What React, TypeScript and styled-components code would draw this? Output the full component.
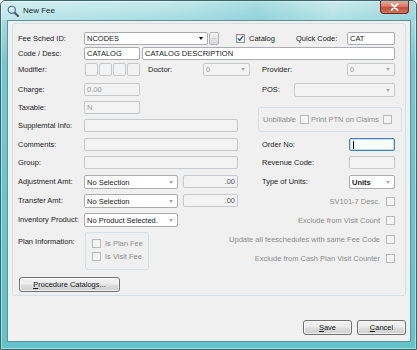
import React from 'react'
import styled, {createGlobalStyle} from 'styled-components'

const GlobalStyle = createGlobalStyle`
  html, body {
    margin: 0;
    padding: 0;
    background: #ffffff;
  }

  body {
    width: 417px;
    height: 350px;
    overflow: hidden;
    font-family: "Liberation Sans", Arial, sans-serif;
  }
`

const Window = styled.div`
  box-sizing: border-box;
  width: 417px;
  height: 350px;
  display: flex;
  flex-direction: column;
  border: 1px solid #3a666c;
  border-radius: 5px 5px 0 0;
  background: linear-gradient(180deg, #c6eaed 0px, #a6dde2 19px, #72c9cf 60px, #62c3c9 100%);
  box-shadow: inset 0 0 0 1px rgba(255, 255, 255, 0.45);
`

const TitleBar = styled.div`
  flex: none;
  height: 19px;
  display: flex;
  align-items: center;
  padding-left: 6px;
  background: linear-gradient(90deg, rgba(255, 255, 255, 0.25) 0%, rgba(255, 255, 255, 0) 40%, rgba(80, 175, 185, 0.22) 62%, rgba(255, 255, 255, 0.1) 80%, rgba(80, 175, 185, 0.2) 100%);
`

const TitleText = styled.span`
  margin-left: 4px;
  font-size: 8px;
  color: #17282a;
`

const CloseButton = styled.div`
  margin-left: auto;
  margin-right: 7px;
  align-self: flex-start;
  box-sizing: border-box;
  width: 29px;
  height: 13px;
  border: 1px solid #6e2a26;
  border-top: none;
  border-radius: 0 0 4px 4px;
  background: linear-gradient(180deg, #eaa898 0%, #dc7a66 45%, #c74b35 55%, #d57659 100%);
  display: flex;
  align-items: center;
  justify-content: center;
`

const Client = styled.div`
  flex: 1;
  margin: 0 5px 7px 6px;
  border: 1px solid #5f9097;
  background: #f0f0f0;
  display: flex;
  flex-direction: column;
  padding: 2px 4px 0 4px;
`

const Panel = styled.div`
  box-sizing: border-box;
  height: 273px;
  border: 1px solid #d5dfe5;
  border-radius: 3px;
  padding: 8px 10px 0 5px;
  display: flex;
  flex-direction: column;
`

const TopRow = styled.div<{ $gap: number }>`
  display: flex;
  align-items: center;
  height: 13px;
  margin-bottom: ${p => p.$gap}px;
`

const Label = styled.span<{ $w?: number; $ml?: number; $gray?: boolean; $pt?: number }>`
  flex: none;
  width: ${p => (p.$w ? `${p.$w}px` : 'auto')};
  margin-left: ${p => p.$ml ?? 0}px;
  padding-top: ${p => p.$pt ?? 0}px;
  font-size: 7.5px;
  line-height: 13px;
  white-space: nowrap;
  color: ${p => (p.$gray ? '#8c8c8c' : '#1c1c1c')};
`

const TextBox = styled.div<{ $w?: number; $ml?: number; $disabled?: boolean; $focused?: boolean; $right?: boolean }>`
  box-sizing: border-box;
  flex: ${p => (p.$w ? 'none' : '1')};
  width: ${p => (p.$w ? `${p.$w}px` : 'auto')};
  height: 13px;
  margin-left: ${p => p.$ml ?? 0}px;
  display: flex;
  align-items: center;
  justify-content: ${p => (p.$right ? 'flex-end' : 'flex-start')};
  padding: 0 2px;
  border: 1px solid ${p => (p.$focused ? '#3f83bd' : p.$disabled ? '#c6c9cc' : '#abadb3')};
  border-radius: 2px;
  background: ${p => (p.$disabled ? '#f3f3f3' : '#ffffff')};
  box-shadow: ${p => (p.$focused ? 'inset 0 0 0 1px #c5dcef' : 'none')};
  font-size: 7.5px;
  white-space: nowrap;
  overflow: hidden;
  color: ${p => (p.$disabled ? '#9a9a9a' : '#1a1a1a')};
`

const Caret = styled.span`
  width: 1px;
  height: 8px;
  margin-left: 1px;
  background: #000000;
`

const Combo = styled.div<{ $w?: number; $ml?: number; $disabled?: boolean; $h?: number }>`
  box-sizing: border-box;
  flex: ${p => (p.$w ? 'none' : '1')};
  width: ${p => (p.$w ? `${p.$w}px` : 'auto')};
  height: ${p => p.$h ?? 14}px;
  margin-left: ${p => p.$ml ?? 0}px;
  display: flex;
  align-items: center;
  padding-left: 2px;
  border: 1px solid ${p => (p.$disabled ? '#c6c9cc' : '#acacac')};
  border-radius: 2px;
  background: ${p => (p.$disabled ? '#f3f3f3' : '#ffffff')};
  font-size: 7.5px;
  color: ${p => (p.$disabled ? '#9a9a9a' : '#1a1a1a')};
`

const ComboText = styled.span<{ $bold?: boolean }>`
  flex: 1;
  white-space: nowrap;
  overflow: hidden;
  font-weight: ${p => (p.$bold ? 'bold' : 'normal')};
`

const Arrow = styled.span<{ $dark?: boolean }>`
  flex: none;
  width: 0;
  height: 0;
  margin-right: 4px;
  border-left: 2.5px solid transparent;
  border-right: 2.5px solid transparent;
  border-top: 3px solid ${p => (p.$dark ? '#151515' : '#a8a8a8')};
`

const DotsButton = styled.div`
  box-sizing: border-box;
  flex: none;
  width: 10px;
  height: 13px;
  margin-left: 1px;
  border: 1px solid #b4b4b4;
  border-radius: 2px;
  background: linear-gradient(180deg, #f4f4f4 0%, #e4e4e4 50%, #d6d6d6 100%);
  font-size: 6px;
  line-height: 9px;
  text-align: center;
  color: #8a8a8a;
`

const ModBox = styled.div`
  box-sizing: border-box;
  flex: none;
  width: 13px;
  height: 13px;
  margin-right: 1px;
  border: 1px solid #c6c9cc;
  border-radius: 2px;
  background: #f3f3f3;
`

const Check = styled.span<{ $ml?: number; $mr?: number; $disabled?: boolean }>`
  box-sizing: border-box;
  flex: none;
  width: 9px;
  height: 9px;
  margin-left: ${p => p.$ml ?? 0}px;
  margin-right: ${p => p.$mr ?? 0}px;
  display: flex;
  align-items: center;
  justify-content: center;
  border: 1px solid ${p => (p.$disabled ? '#b9b9b9' : '#8e8f8f')};
  background: ${p => (p.$disabled ? '#f4f4f4' : 'linear-gradient(135deg, #e6e6e6 0%, #ffffff 100%)')};
`

const FormGrid = styled.div`
  display: grid;
  margin-top: 7px;
  grid-template-columns: 66px 154px 24px 87px 46px;
  grid-template-rows: 18px 18px 19px 18px 19px 19px 19px 19px 19px 19px;
`

const Cell = styled.div<{ $col: string; $row?: string; $end?: boolean; $pt?: number }>`
  grid-column: ${p => p.$col};
  grid-row: ${p => p.$row ?? 'auto'};
  display: flex;
  align-items: flex-start;
  justify-content: ${p => (p.$end ? 'flex-end' : 'flex-start')};
  padding-top: ${p => p.$pt ?? 0}px;
  min-width: 0;
`

const GroupBox = styled.div`
  box-sizing: border-box;
  border: 1px solid #d5dfe5;
  border-radius: 3px;
`

const UnbillBox = styled(GroupBox)`
  grid-column: 4 / 6;
  grid-row: 2 / span 2;
  align-self: center;
  height: 25px;
  margin: 0 -7px 0 -4px;
  display: flex;
  align-items: center;
  padding-left: 4px;
`

const PlanBox = styled(GroupBox)`
  grid-column: 2;
  grid-row: 9 / span 2;
  width: 64px;
  height: 38px;
  margin-left: 1px;
  display: flex;
  flex-direction: column;
  gap: 4px;
  padding: 6px 0 0 6px;
`

const CheckRow = styled.div`
  display: flex;
  align-items: center;
  height: 9px;
`

const PushButton = styled.div<{ $w: number; $ml?: number }>`
  box-sizing: border-box;
  width: ${p => p.$w}px;
  height: 15px;
  margin-left: ${p => p.$ml ?? 0}px;
  border: 1px solid #707070;
  border-radius: 3px;
  background: linear-gradient(180deg, #f2f2f2 0%, #ebebeb 48%, #dddddd 52%, #cfcfcf 100%);
  box-shadow: inset 0 0 0 1px rgba(255, 255, 255, 0.7);
  font-size: 7.5px;
  line-height: 13px;
  text-align: center;
  color: #141414;

  u {
    text-decoration: underline;
  }
`

const Footer = styled.div`
  display: flex;
  justify-content: flex-end;
  margin-top: 24px;
  gap: 5px;
`

const MagnifierIcon = () => (
    <svg width="12" height="12" viewBox="0 0 12 12">
        <line x1="7" y1="7" x2="11" y2="11" stroke="#5a5a5a" strokeWidth="2.2" strokeLinecap="round"/>
        <circle cx="4.8" cy="4.8" r="3.6" fill="#cfe8f8" stroke="#3d6f9f" strokeWidth="1.1"/>
        <circle cx="3.8" cy="3.8" r="1.3" fill="#ffffff" opacity="0.8"/>
    </svg>
)

const CloseX = () => (
    <svg width="9" height="8" viewBox="0 0 9 8">
        <path d="M1.5 1 L7.5 7 M7.5 1 L1.5 7" stroke="#ffffff" strokeWidth="1.8" strokeLinecap="round"/>
    </svg>
)

const Tick = () => (
    <svg width="7" height="7" viewBox="0 0 7 7">
        <path d="M1 3.5 L2.8 5.5 L6 1" stroke="#3a5a96" strokeWidth="1.3" fill="none"/>
    </svg>
)

const rightChecks = [
    {row: '7', text: 'SV101-7 Desc.'},
    {row: '8', text: 'Exclude from Visit Count'},
    {row: '9', text: 'Update all feeschedules with same Fee Code'},
    {row: '10', text: 'Exclude from Cash Plan Visit Counter'},
]

const App = () => {
    return (
        <>
            <GlobalStyle/>
            <Window>
                <TitleBar>
                    <MagnifierIcon/>
                    <TitleText>New Fee</TitleText>
                    <CloseButton><CloseX/></CloseButton>
                </TitleBar>

                <Client>
                    <Panel>
                        <TopRow $gap={2}>
                            <Label $w={66}>Fee Sched ID:</Label>
                            <Combo $w={124} $h={13}>
                                <ComboText>NCODES</ComboText>
                                <Arrow $dark/>
                            </Combo>
                            <DotsButton>...</DotsButton>
                            <Check $ml={17}><Tick/></Check>
                            <Label $ml={4}>Catalog</Label>
                            <Label $w={51} style={{marginLeft: 'auto'}}>Quick Code:</Label>
                            <TextBox $w={48}>CAT</TextBox>
                        </TopRow>

                        <TopRow $gap={3}>
                            <Label $w={66}>Code / Desc:</Label>
                            <TextBox $w={56}>CATALOG</TextBox>
                            <TextBox $ml={2}>CATALOG DESCRIPTION</TextBox>
                        </TopRow>

                        <TopRow $gap={0}>
                            <Label $w={67}>Modifier:</Label>
                            <ModBox/><ModBox/><ModBox/><ModBox/>
                            <Label $w={55} $ml={7}>Doctor:</Label>
                            <Combo $w={47} $h={13} $disabled>
                                <ComboText>0</ComboText>
                                <Arrow/>
                            </Combo>
                            <Label $w={85} $ml={12}>Provider:</Label>
                            <Combo $w={48} $h={13} $disabled>
                                <ComboText>0</ComboText>
                                <Arrow/>
                            </Combo>
                        </TopRow>

                        <FormGrid>
                            <Cell $col="1" $row="1"><Label>Charge:</Label></Cell>
                            <Cell $col="2" $row="1"><TextBox $w={56} $disabled>0.00</TextBox></Cell>
                            <Cell $col="4 / 6" $row="1">
                                <Label $w={32}>POS:</Label>
                                <Combo $disabled><ComboText/><Arrow/></Combo>
                            </Cell>

                            <Cell $col="1" $row="2"><Label>Taxable:</Label></Cell>
                            <Cell $col="2" $row="2"><TextBox $w={56} $disabled>N</TextBox></Cell>
                            <UnbillBox>
                                <Label $gray>Unbillable</Label>
                                <Check $ml={4} $disabled/>
                                <Label $gray $ml={2}>Print PTN on Claims</Label>
                                <Check $disabled style={{marginLeft: 'auto', marginRight: 9}}/>
                            </UnbillBox>

                            <Cell $col="1" $row="3"><Label>Supplemtal Info:</Label></Cell>
                            <Cell $col="2" $row="3"><TextBox $disabled/></Cell>

                            <Cell $col="1" $row="4"><Label>Comments:</Label></Cell>
                            <Cell $col="2" $row="4"><TextBox $disabled/></Cell>
                            <Cell $col="4" $row="4"><Label>Order No:</Label></Cell>
                            <Cell $col="5" $row="4"><TextBox $focused><Caret/></TextBox></Cell>

                            <Cell $col="1" $row="5"><Label>Group:</Label></Cell>
                            <Cell $col="2" $row="5"><TextBox $disabled/></Cell>
                            <Cell $col="4" $row="5"><Label>Revenue Code:</Label></Cell>
                            <Cell $col="5" $row="5"><TextBox $disabled/></Cell>

                            <Cell $col="1" $row="6"><Label>Adjustment Amt:</Label></Cell>
                            <Cell $col="2" $row="6">
                                <Combo $w={94}><ComboText>No Selection</ComboText><Arrow/></Combo>
                                <TextBox $ml={5} $disabled $right style={{color: '#555555'}}>.00</TextBox>
                            </Cell>
                            <Cell $col="4" $row="6"><Label>Type of Units:</Label></Cell>
                            <Cell $col="5" $row="6">
                                <Combo><ComboText $bold>Units</ComboText><Arrow/></Combo>
                            </Cell>

                            <Cell $col="1" $row="7"><Label>Transfer Amt:</Label></Cell>
                            <Cell $col="2" $row="7">
                                <Combo $w={94}><ComboText>No Selection</ComboText><Arrow/></Combo>
                                <TextBox $ml={5} $disabled $right style={{color: '#555555'}}>.00</TextBox>
                            </Cell>

                            <Cell $col="1" $row="8"><Label>Inventory Product:</Label></Cell>
                            <Cell $col="2" $row="8">
                                <Combo $w={94}><ComboText>No Product Selected.</ComboText><Arrow/></Combo>
                            </Cell>

                            <Cell $col="1" $row="9"><Label $pt={3}>Plan Information:</Label></Cell>
                            <PlanBox>
                                <CheckRow>
                                    <Check $disabled $mr={4}/>
                                    <Label $gray>Is Plan Fee</Label>
                                </CheckRow>
                                <CheckRow>
                                    <Check $disabled $mr={4}/>
                                    <Label $gray>Is Visit Fee</Label>
                                </CheckRow>
                            </PlanBox>

                            {rightChecks.map(item => (
                                <Cell key={item.row} $col="3 / 6" $row={item.row} $end $pt={3}>
                                    <CheckRow>
                                        <Label $gray>{item.text}</Label>
                                        <Check $disabled $ml={6}/>
                                    </CheckRow>
                                </Cell>
                            ))}
                        </FormGrid>

                        <PushButton $w={101} $ml={1} style={{marginTop: 7}}>
                            <u>P</u>rocedure Catalogs...
                        </PushButton>
                    </Panel>

                    <Footer>
                        <PushButton $w={49}><u>S</u>ave</PushButton>
                        <PushButton $w={49}><u>C</u>ancel</PushButton>
                    </Footer>
                </Client>
            </Window>
        </>
    )
}

export default App
